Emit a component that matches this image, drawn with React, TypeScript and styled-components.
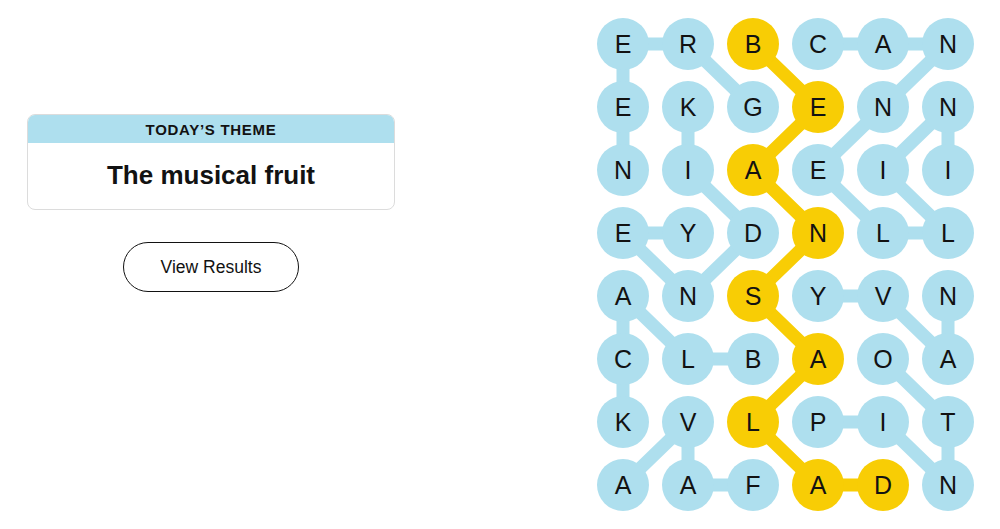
import React from "react";
import styled, { createGlobalStyle } from "styled-components";

const GlobalStyle = createGlobalStyle`
  html, body { margin: 0; padding: 0; background: #ffffff; }
  body { font-family: "Liberation Sans", Arial, sans-serif; color: #121212; }
`;

const BLUE = "#aedfee";
const YELLOW = "#f8cd05";
const CELL = 52;
const COL_STEP = 65;
const ROW_STEP = 63;

const LETTERS = [
  "ERBCAN",
  "EKGENN",
  "NIAEII",
  "EYDNLL",
  "ANSYVN",
  "CLBAOA",
  "KVLPIT",
  "AAFADN",
];

const SPANGRAM: [number, number][] = [
  [0, 2], [1, 3], [2, 2], [3, 3], [4, 2], [5, 3], [6, 2], [7, 3], [7, 4],
];

const WORDS: [number, number][][] = [
  // GREEN
  [[1, 2], [0, 1], [0, 0], [1, 0], [2, 0]],
  // KIDNEY
  [[1, 1], [2, 1], [3, 2], [4, 1], [3, 0], [3, 1]],
  // CANNELLINI
  [[0, 3], [0, 4], [0, 5], [1, 4], [2, 3], [3, 4], [3, 5], [2, 4], [1, 5], [2, 5]],
  // NAVY
  [[4, 5], [5, 5], [4, 4], [4, 3]],
  // PINTO
  [[6, 3], [6, 4], [7, 5], [6, 5], [5, 4]],
  // BLACK
  [[5, 2], [5, 1], [4, 0], [5, 0], [6, 0]],
  // FAVA
  [[7, 2], [7, 1], [6, 1], [7, 0]],
];

const isSpangram = (r: number, c: number) =>
  SPANGRAM.some(([a, b]) => a === r && b === c);

const Page = styled.main`
  display: flex;
  align-items: flex-start;
  width: 1000px;
  height: 529px;
  overflow: hidden;
`;

const Side = styled.section`
  width: 368px;
  padding: 114px 0 0 27px;
  display: flex;
  flex-direction: column;
  align-items: center;
  gap: 32px;
`;

const ThemeCard = styled.div`
  width: 100%;
  box-sizing: border-box;
  border: 1px solid #dcdcdc;
  border-radius: 8px;
  overflow: hidden;
  background: #ffffff;
`;

const ThemeHeader = styled.div`
  height: 28px;
  background: ${BLUE};
  display: flex;
  align-items: center;
  justify-content: center;
  font-size: 15px;
  font-weight: 700;
  letter-spacing: 0.7px;
  color: #121212;
`;

const ThemeTitle = styled.div`
  height: 66px;
  display: flex;
  align-items: center;
  justify-content: center;
  font-size: 26px;
  font-weight: 700;
  color: #121212;
  padding-bottom: 1px;
  box-sizing: border-box;
`;

const ResultsButton = styled.button`
  width: 176px;
  height: 50px;
  border: 1px solid #121212;
  border-radius: 25px;
  background: #ffffff;
  font-family: inherit;
  font-size: 17.5px;
  color: #121212;
  cursor: pointer;
`;

const BoardWrap = styled.section`
  margin: 18px 0 0 202px;
  position: relative;
  width: ${CELL * 6 + (COL_STEP - CELL) * 5}px;
  height: ${CELL * 8 + (ROW_STEP - CELL) * 7}px;
`;

const Lines = styled.svg`
  position: absolute;
  inset: 0;
  width: 100%;
  height: 100%;
`;

const Grid = styled.div`
  position: relative;
  display: grid;
  grid-template-columns: repeat(6, ${CELL}px);
  grid-auto-rows: ${CELL}px;
  column-gap: ${COL_STEP - CELL}px;
  row-gap: ${ROW_STEP - CELL}px;
`;

const Cell = styled.div<{ $spangram: boolean }>`
  width: ${CELL}px;
  height: ${CELL}px;
  border-radius: 50%;
  background: ${(p) => (p.$spangram ? YELLOW : BLUE)};
  display: flex;
  align-items: center;
  justify-content: center;
  font-size: 25px;
  font-weight: 400;
  color: #121212;
  line-height: 1;
`;

const pt = ([r, c]: [number, number]) => ({
  x: CELL / 2 + c * COL_STEP,
  y: CELL / 2 + r * ROW_STEP,
});

const Path = ({ cells, color }: { cells: [number, number][]; color: string }) => (
  <polyline
    points={cells.map((p) => { const q = pt(p); return `${q.x},${q.y}`; }).join(" ")}
    fill="none"
    stroke={color}
    strokeWidth={13}
    strokeLinejoin="round"
    strokeLinecap="round"
  />
);

export default function App() {
  return (
    <>
      <GlobalStyle />
      <Page>
        <Side>
          <ThemeCard>
            <ThemeHeader>TODAY’S THEME</ThemeHeader>
            <ThemeTitle>The musical fruit</ThemeTitle>
          </ThemeCard>
          <ResultsButton>View Results</ResultsButton>
        </Side>
        <BoardWrap>
          <Lines>
            {WORDS.map((w, i) => (
              <Path key={i} cells={w} color={BLUE} />
            ))}
            <Path cells={SPANGRAM} color={YELLOW} />
          </Lines>
          <Grid>
            {LETTERS.map((row, r) =>
              row.split("").map((ch, c) => (
                <Cell key={`${r}-${c}`} $spangram={isSpangram(r, c)}>
                  {ch}
                </Cell>
              ))
            )}
          </Grid>
        </BoardWrap>
      </Page>
    </>
  );
}
